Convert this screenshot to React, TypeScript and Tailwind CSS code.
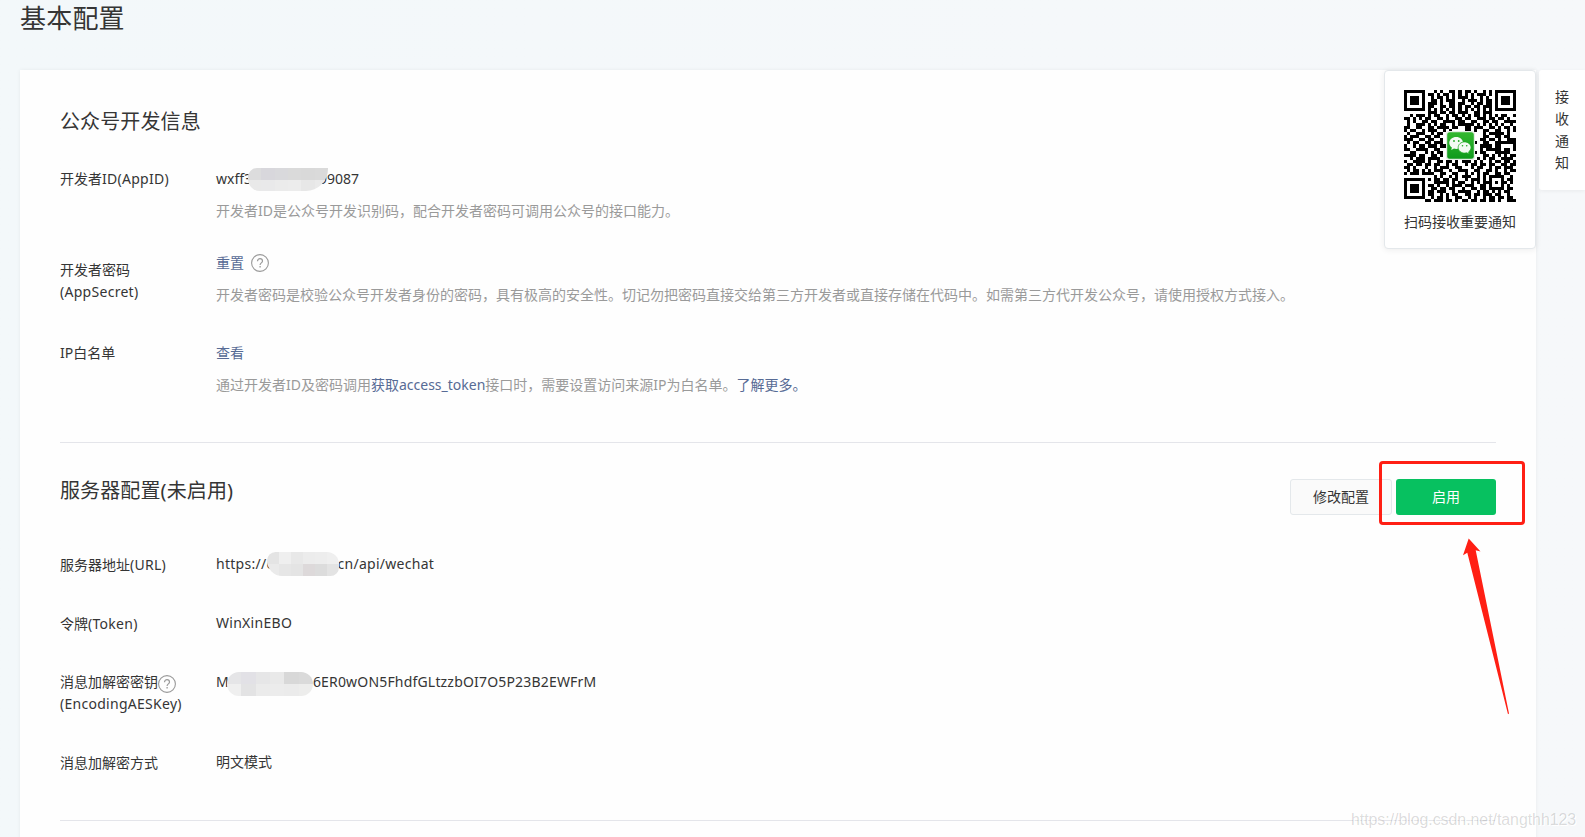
import clsx from 'clsx'
import type { ReactNode } from 'react'

const QR_ROWS = [
  '#######...#.#..##.#.##.#..#.#.#######',
  '#.....#.##.#.##.#.#.#.#.###.#.#.....#',
  '#.###.#..#.##.#.#.###.#..#.#..#.###.#',
  '#.###.#..##.#.###..#.###.#.##.#.###.#',
  '#.###.#.###.#..##.##..#.##.##.#.###.#',
  '#.....#.##..##.##.#.##.##.###.#.....#',
  '#######.#.#.#.#.#.#.#.#.#.#.#.#######',
  '........###.##.##.###..##.###........',
  '..#.###.#.##..#.##.#.#.##.#.#.#.##..#',
  '##.#.#.##..##.#..##.##..###.##.##.#..',
  '.#.#..##.##..####.##..##..##.##..####',
  '.#..###.#.#.##..#.#####.#.#.#.#.#..#.',
  '##..##..##.####.##..##.###..##.#.##.#',
  '#.##..#.###..#.#....##.#..##..##..#.#',
  '.#..###..#.##.............#.#####.#..',
  '#.###..##.##..............##..##.##..',
  '###..##.##..#............##.##.#..###',
  '.#.##..##.###..........#..##..#######',
  '#..#.##.###.##...........####.##....#',
  '##..####..##.............#.#####.##.#',
  '..##...#.#.##..........#.##...#####..',
  '####.##..##.#.............##.#.#.#.##',
  '..#.###.####............#.#.##..####.',
  '#..####.#..##.##.#.###.#.#..#.##.##.#',
  '.##.##.##.##..#.##..#.##.##.##..##.##',
  '##.#...#..#.###..##...#.##..#.##.###.',
  '.#.##.#.#.###..#..###..##..##.#..#.##',
  '#.###.####..##..##..#.#.#.##..##.##..',
  '..........#.#..#.#.###..#.#.#####..#.',
  '#######.#.##.##.##..#.###.#.#...#.##.',
  '#.....#...#####.#.##..#.#.###.#.##.#.',
  '#.###.#.##.#..#.###.###..##.#...#.#..',
  '#.###.#..##.##.##..#..##.##.#####.##.',
  '#.###.#.##.###..#.####..#.##.#.#.##..',
  '#.....#.##..#.#.##..##.##.###.##..#..',
  '#######..#.##.#..##..#.#..#.##.##.##.',
  '.......##.###.##.#.##.##.##.##.#..###',
]

const WechatLogo = () => (
  <svg className="absolute top-[41px] left-[42px] h-[29px] w-[29px]" viewBox="0 0 29 29">
    <defs>
      <linearGradient id="logo" x1="0" y1="0" x2="0" y2="1">
        <stop offset="0" stopColor="#33b82f" />
        <stop offset="1" stopColor="#0f9a1c" />
      </linearGradient>
    </defs>
    <rect width="29" height="29" rx="3" fill="#e3ece3" />
    <rect x="1.2" y="1.2" width="26.6" height="26.6" rx="2.5" fill="url(#logo)" />
    <path d="M10.2 6C6.300 6 3.300 8.600 3.300 12c0 1.900 1 3.500 2.600 4.600l-.7 2.500 2.800-1.500c.7.200 1.500.3 2.200.3 3.900 0 6.900-2.600 6.900-5.900S14.100 6 10.200 6Z" fill="#f4faf4" />
    <path d="M18.600 10.900c-3.600 0-6.400 2.500-6.400 5.600s2.800 5.600 6.400 5.600c.8 0 1.500-.1 2.200-.3l2.400 1.300-.6-2.200c1.500-1 2.400-2.600 2.400-4.400 0-3.100-2.800-5.600-6.400-5.600Z" fill="#f4faf4" stroke="#23a825" strokeWidth=".8" />
    <g fill="#23a825">
      <circle cx="8" cy="10" r=".9" />
      <circle cx="12.700" cy="10" r=".9" />
      <circle cx="16.500" cy="14.800" r=".8" />
      <circle cx="20.700" cy="14.800" r=".8" />
    </g>
  </svg>
)

const QrCode = () => (
  <div className="relative h-[112px] w-[112px]">
    <svg className="h-full w-full" viewBox="0 0 37 37" shapeRendering="crispEdges">
      <path d={QR_ROWS.map((row, y) => [...row].map((c, x) => (c === '#' ? `M${x} ${y}h1v1h-1z` : '')).join('')).join('')} />
    </svg>
    <WechatLogo />
  </div>
)

const HelpIcon = ({ className }: { className?: string }) => (
  <svg className={clsx('h-[18px] w-[18px] shrink-0', className)} viewBox="0 0 18 18" fill="none" stroke="#9a9a9a">
    <circle cx="9" cy="9" r="8.400" strokeWidth="1.100" />
    <path d="M6.500 7.200C6.500 5.600 7.600 4.700 9 4.700s2.500.9 2.500 2.300c0 1.900-2.400 1.900-2.400 4" strokeWidth="1.200" />
    <path d="M9.100 12.100v1.400" strokeWidth="1.300" />
  </svg>
)

type MosaicProps = {
  className: string
  tiles: string[]
}

// Pixelated cover over the private part of a value
const Mosaic = ({ className, tiles }: MosaicProps) => (
  <span className={clsx('absolute grid grid-cols-6 overflow-hidden', className)}>
    {tiles.map((tile, i) => (
      <span key={i} className={tile} />
    ))}
  </span>
)

const ID_TILES = [
  'bg-[#dcdcdd]', 'bg-[#d8d7dc]', 'bg-[#d9d9dc]', 'bg-[#dadada]', 'bg-[#d9d9d9]', 'bg-[#dadada]',
  'bg-[#e9e9e9]', 'bg-[#e9e9ea]', 'bg-[#ebebeb]', 'bg-[#ececec]', 'bg-[#e7e7e7]', 'bg-[#eaeaea]',
]
const URL_TILES = [
  'bg-[#e4e4e4]', 'bg-[#efefef]', 'bg-[#e8e8e8]', 'bg-[#ececec]', 'bg-[#ededed]', 'bg-[#efefef]',
  'bg-[#eaeaea]', 'bg-[#e6e6e6]', 'bg-[#e4e4e4]', 'bg-[#ddd9da]', 'bg-[#dcdcdc]', 'bg-[#e3e3e3]',
]
const KEY_TILES = [
  'bg-[#e5e5e7]', 'bg-[#e2e1e6]', 'bg-[#e6e6e7]', 'bg-[#e9e9e9]', 'bg-[#d8d8d8]', 'bg-[#dadada]',
  'bg-[#efefef]', 'bg-[#e3e3e4]', 'bg-[#ebebeb]', 'bg-[#ececec]', 'bg-[#ebebeb]', 'bg-[#ededec]',
]

type RowProps = {
  label: ReactNode
  labelClass?: string
  className?: string
  children: ReactNode
}

const Row = ({ label, labelClass, className, children }: RowProps) => (
  <div className={clsx('flex', className)}>
    <div className={clsx('w-[156px] shrink-0', labelClass)}>{label}</div>
    <div className="whitespace-nowrap">{children}</div>
  </div>
)

const Latin = ({ children }: { children: ReactNode }) => <span className="tracking-[0.28px]">{children}</span>

const Tip = ({ children }: { children: ReactNode }) => <p className="mt-2.5 text-[#9a9a9a]">{children}</p>

const Link = ({ children }: { children: ReactNode }) => <a className="text-[#576b95]">{children}</a>

export default function App() {
  return (
    <div className="relative h-[837px] w-[1585px] overflow-hidden bg-linear-to-r from-[#f3f8fa] to-[#f6f8fa] font-['Noto_Sans','Noto_Sans_CJK_SC',sans-serif] text-sm leading-[22px] text-[#353535]">
      <h1 className="h-[70px] pl-5 text-[26px] leading-[37px] tracking-[0.2px]">基本配置</h1>

      <div className="flex items-start">
        <main className="ml-5 h-[780px] w-[1516px] bg-[#fefefe] px-10 pt-[38px] shadow-[0_0_4px_rgba(0,0,0,0.06)]">
          <section className="h-[335px] border-b border-[#e4e5ea]">
            <h2 className="text-xl leading-7 tracking-[0.12px]">公众号开发信息</h2>
            <Row
              label={
                <>
                  开发者<Latin>ID(AppID)</Latin>
                </>
              }
              className="mt-8"
            >
              <div className="relative">
                wxff3<span className="inline-block w-[67px]" />99087
                <Mosaic className="top-0 left-[32px] h-[23px] w-[80px] rounded-tl-[9px] rounded-br-[22px] rounded-bl-[12px]" tiles={ID_TILES} />
              </div>
              <Tip>开发者ID是公众号开发识别码，配合开发者密码可调用公众号的接口能力。</Tip>
            </Row>
            <Row
              label={
                <>
                  开发者密码
                  <br />
                  <Latin>(AppSecret)</Latin>
                </>
              }
              labelClass="pt-[7px]"
              className="mt-[30px]"
            >
              <div className="flex items-center gap-[7px]">
                <Link>重置</Link>
                <HelpIcon />
              </div>
              <Tip>
                开发者密码是校验公众号开发者身份的密码，具有极高的安全性。切记勿把密码直接交给第三方开发者或直接存储在代码中。如需第三方代开发公众号，请使用授权方式接入。
              </Tip>
            </Row>
            <Row label="IP白名单" className="mt-9">
              <Link>查看</Link>
              <Tip>
                通过开发者ID及密码调用<Link>获取access_token</Link>接口时，需要设置访问来源IP为白名单。<Link>了解更多。</Link>
              </Tip>
            </Row>
          </section>

          <section className="h-[378px] border-b border-[#e4e5ea] pt-[34px]">
            <div className="flex h-[42px] justify-between">
              <h2 className="text-xl leading-7 tracking-[0.12px]">服务器配置(未启用)</h2>
              <div className="mt-0.5 flex h-9 gap-1">
                <button className="w-[102px] rounded-[3px] border border-[#e4e8eb] bg-[#fafafa]">修改配置</button>
                <button className="w-[100px] rounded-[3px] bg-[#07c160] text-white">启用</button>
              </div>
            </div>
            <Row
              label={
                <>
                  服务器地址<Latin>(URL)</Latin>
                </>
              }
              labelClass="pt-px"
              className="mt-[34px]"
            >
              <div className="relative">
                <Latin>
                  https://c<span className="inline-block w-[64px]" />cn/api/wechat
                </Latin>
                <Mosaic className="-top-px left-[51px] h-6 w-[72px] rounded-tl-[10px] rounded-tr-[14px] rounded-br-[10px] rounded-bl-[18px]" tiles={URL_TILES} />
              </div>
            </Row>
            <Row
              label={
                <>
                  令牌<Latin>(Token)</Latin>
                </>
              }
              labelClass="pt-px"
              className="mt-9"
            >
              <Latin>WinXinEBO</Latin>
            </Row>
            <Row
              label={
                <>
                  <span className="flex h-[22px] items-center">
                    消息加解密密钥
                    <HelpIcon className="mt-[3px]" />
                  </span>
                  <Latin>(EncodingAESKey)</Latin>
                </>
              }
              className="mt-9"
            >
              <div className="relative tracking-[0.18px]">
                M<span className="inline-block w-[84px]" />6ER0wON5FhdfGLtzzbOI7O5P23B2EWFrM
                <Mosaic className="top-px left-[11px] h-6 w-[86px] rounded-xl" tiles={KEY_TILES} />
              </div>
            </Row>
            <Row label="消息加解密方式" labelClass="pt-px" className="mt-9">
              明文模式
            </Row>
          </section>
        </main>
        <aside className="ml-[3px] w-[46px] rounded-l-[3px] bg-white py-4 pl-4 shadow-[0_1px_4px_rgba(0,0,0,0.06)]">
          <span className="block w-3.5 break-all">接收通知</span>
        </aside>
      </div>

      <div className="absolute top-[70px] left-[1384px] h-[179px] w-[152px] rounded-[4px] border border-[#e4e8eb] bg-white px-[19px] pt-[19px] shadow-[0_1px_6px_rgba(0,0,0,0.07)]">
        <QrCode />
        <p className="mt-[9px] whitespace-nowrap">扫码接收重要通知</p>
      </div>

      <div className="absolute top-[461px] left-[1379px] h-16 w-[146px] rounded-[4px] border-3 border-[#ff1f14]" />
      <svg className="absolute top-[538px] left-[1462px] h-[177px] w-[50px]" viewBox="0 0 50 177">
        <path d="M6.700 .5 18.500 13.600 13.700 12.300 47 175.500 46 176.200 5.300 14.700 1 17.300Z" fill="#ff1f14" />
      </svg>

      <span className="absolute top-[808px] left-[1351px] font-['Liberation_Sans',sans-serif] text-base tracking-[-0.08px] text-black/15 [text-shadow:1px_1px_0_#fff]">
        https://blog.csdn.net/tangthh123
      </span>
    </div>
  )
}
